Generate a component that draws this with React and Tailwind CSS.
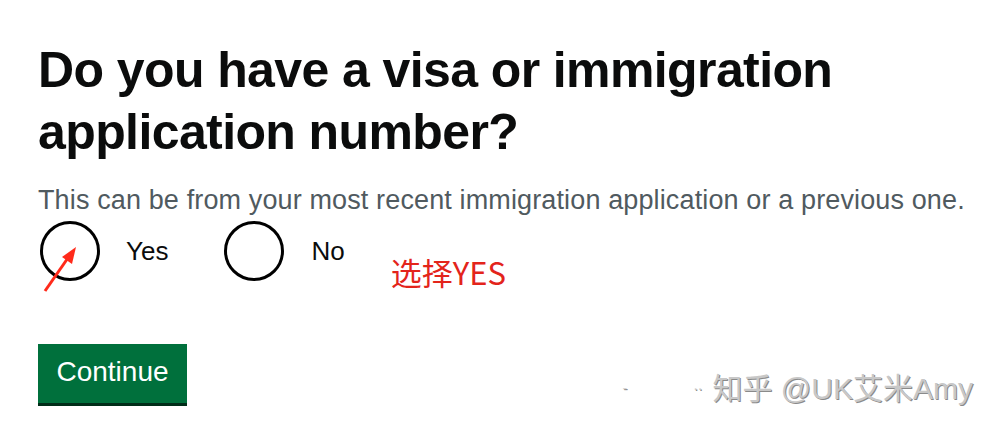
export default function App() {
  return (
    <div className="w-[999px] h-[436px] bg-white relative overflow-hidden" style={{ fontFamily: '"Liberation Sans", Arial, sans-serif' }}>
      <div className="pl-[38px] pt-[39px] flex flex-col">
        <h1 className="text-[50px] leading-[62px] font-bold text-[#0b0c0c] tracking-[-0.6px]">
          Do you have a visa or immigration
          <br />
          application number?
        </h1>
        <p className="mt-[21px] text-[27px] leading-[32px] text-[#505a5f] tracking-[0.13px]">
          This can be from your most recent immigration application or a previous one.
        </p>
        <div className="mt-[4px] flex items-center h-[62px]">
          <div className="relative flex items-center ml-[2px]">
            <span className="w-[60px] h-[60px] rounded-full border-[3px] border-black" />
            <svg className="absolute left-[2px] top-[24px]" width="40" height="50" viewBox="0 0 40 50">
              <line x1="3" y1="46" x2="28" y2="10" stroke="#ff2a1a" strokeWidth="3" />
              <polygon points="34,2 20,12 30,19" fill="#ff2a1a" />
            </svg>
            <span className="ml-[26px] text-[26px] text-[#0b0c0c]">Yes</span>
          </div>
          <div className="ml-[56px] flex items-center">
            <span className="w-[60px] h-[60px] rounded-full border-[3px] border-black" />
            <span className="ml-[27px] text-[26px] text-[#0b0c0c]">No</span>
          </div>
          <span
            className="ml-[46px] mt-[42px] text-[31px] text-[#e3241b]"
            style={{ fontFamily: '"Noto Sans CJK SC", "Liberation Sans", sans-serif' }}
          >
            选择YES
          </span>
        </div>
        <div className="mt-[62px] flex items-end justify-between pr-[26px]">
          <button className="w-[149px] h-[59px] bg-[#00703c] shadow-[0_3px_0_#002d18] text-white text-[28px] leading-none pb-[3px]">
            Continue
          </button>
          <div
            className="flex items-center gap-[10px] mb-[-8px] text-[30px] text-[#c8c8c8] [text-shadow:1px_1px_0_#8a8a8a]"
            style={{ fontFamily: '"Liberation Sans", "Noto Sans CJK SC", sans-serif' }}
          >
            <span className="text-[14px] text-[#d6d6d6] mr-[56px]">-</span>
            <span className="text-[14px]">··</span>
            <span>知乎 @UK艾米Amy</span>
          </div>
        </div>
      </div>
    </div>
  );
}
